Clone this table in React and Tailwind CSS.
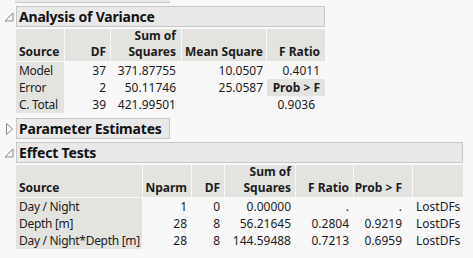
import React from 'react';

const OpenIcon = () => (
  <svg width="10" height="10" viewBox="0 0 10 10" className="block">
    <path d="M1 9 L9 1 L9 9 Z" fill="none" stroke="#8a8a8a" strokeWidth="1" />
  </svg>
);

const ClosedIcon = () => (
  <svg width="7" height="12" viewBox="0 0 7 12" className="block">
    <path d="M0.5 0.5 L6.5 6 L0.5 11.5 Z" fill="none" stroke="#8a8a8a" strokeWidth="1" />
  </svg>
);

const Header = ({ title, width, open }) => (
  <div className="flex items-center">
    <div className="w-[16px] flex justify-center pl-[2px]">{open ? <OpenIcon /> : <ClosedIcon />}</div>
    <div
      className="h-[21px] bg-[#e9e9e9] border border-[#c6c6c6] flex items-center pl-[2px] text-[14px] font-bold text-[#111] leading-none whitespace-nowrap tracking-[-0.2px]"
      style={{ width }}
    >
      {title}
    </div>
  </div>
);

const aovCols = [
  { w: 'w-[48px]', h: 'Source', left: true },
  { w: 'w-[45px]', h: 'DF', pr: 'pr-[4px]' },
  { w: 'w-[70px]', h: ['Sum of', 'Squares'], pr: 'pr-[5px]' },
  { w: 'w-[84px]', h: 'Mean Square', pr: 'pr-[3px]' },
  { w: 'w-[58px]', h: 'F Ratio', pr: 'pr-[5px]' },
];

const aovRows = [
  ['Model', '37', '371.87755', '10.0507', '0.4011'],
  ['Error', '2', '50.11746', '25.0587', 'PROB'],
  ['C. Total', '39', '421.99501', '', '0.9036'],
];

const etCols = [
  { w: 'w-[126px]', h: 'Source', left: true },
  { w: 'w-[48px]', h: 'Nparm', pr: 'pr-[4px]' },
  { w: 'w-[32px]', h: 'DF', pr: 'pr-[4px]' },
  { w: 'w-[70px]', h: ['Sum of', 'Squares'], pr: 'pr-[4px]' },
  { w: 'w-[57px]', h: 'F Ratio', pr: 'pr-[4px]' },
  { w: 'w-[58px]', h: 'Prob > F', pr: 'pr-[10px]' },
  { w: 'w-[50px]', h: '', left: true },
];

const etRows = [
  ['Day / Night', '1', '0', '0.00000', '.', '.', 'LostDFs'],
  ['Depth [m]', '28', '8', '56.21645', '0.2804', '0.9219', 'LostDFs'],
  ['Day / Night*Depth [m]', '28', '8', '144.59488', '0.7213', '0.6959', 'LostDFs'],
];

const Table = ({ cols, rows }) => (
  <div className="ml-[16px] flex gap-x-[1px]">
    {cols.map((c, ci) => (
      <div key={ci} className={`${c.w} flex flex-col`}>
        <div
          className={`h-[32px] bg-[#e3e3df] flex flex-col justify-end pb-[1px] font-bold leading-[16px] whitespace-nowrap ${
            c.left ? 'items-start pl-[3px]' : `items-end ${c.pr}`
          }`}
        >
          {Array.isArray(c.h) ? c.h.map((t) => <span key={t}>{t}</span>) : <span>{c.h}</span>}
        </div>
        <div className="h-[1px]" />
        {rows.map((r, ri) => {
          const v = r[ci];
          if (v === 'PROB') {
            return (
              <div key={ri} className="h-[17px] bg-[#e3e3df] flex items-center justify-end pr-[5px] font-bold leading-none whitespace-nowrap">
                Prob &gt; F
              </div>
            );
          }
          const grey = ci === 0;
          const extra = v === '0.9036' ? 'pr-[10px]' : c.pr;
          return (
            <div
              key={ri}
              className={`h-[17px] flex items-center leading-none whitespace-nowrap ${grey ? 'bg-[#e3e3df] tracking-[-0.3px]' : ''} ${
                c.left ? 'justify-start pl-[3px]' : `justify-end ${extra}`
              }`}
            >
              {v}
            </div>
          );
        })}
      </div>
    ))}
  </div>
);

export default function App() {
  return (
    <div
      className="w-[473px] h-[258px] overflow-hidden bg-[#f8f8f8] text-[#1c1c1c] text-[12px]"
      style={{ fontFamily: '"Noto Sans", "Open Sans", Arial, sans-serif' }}
    >
      <div className="ml-[15px] w-[155px] h-[3px] bg-[#e9e9e9] border-b border-[#c6c6c6]" />
      <div className="h-[3px]" />
      <Header title="Analysis of Variance" width={309} open />
      <div className="h-[2px]" />
      <Table cols={aovCols} rows={aovRows} />
      <div className="h-[5px]" />
      <Header title="Parameter Estimates" width={154} />
      <div className="h-[3px]" />
      <Header title="Effect Tests" width={447} open />
      <div className="h-[2px]" />
      <Table cols={etCols} rows={etRows} />
    </div>
  );
}
